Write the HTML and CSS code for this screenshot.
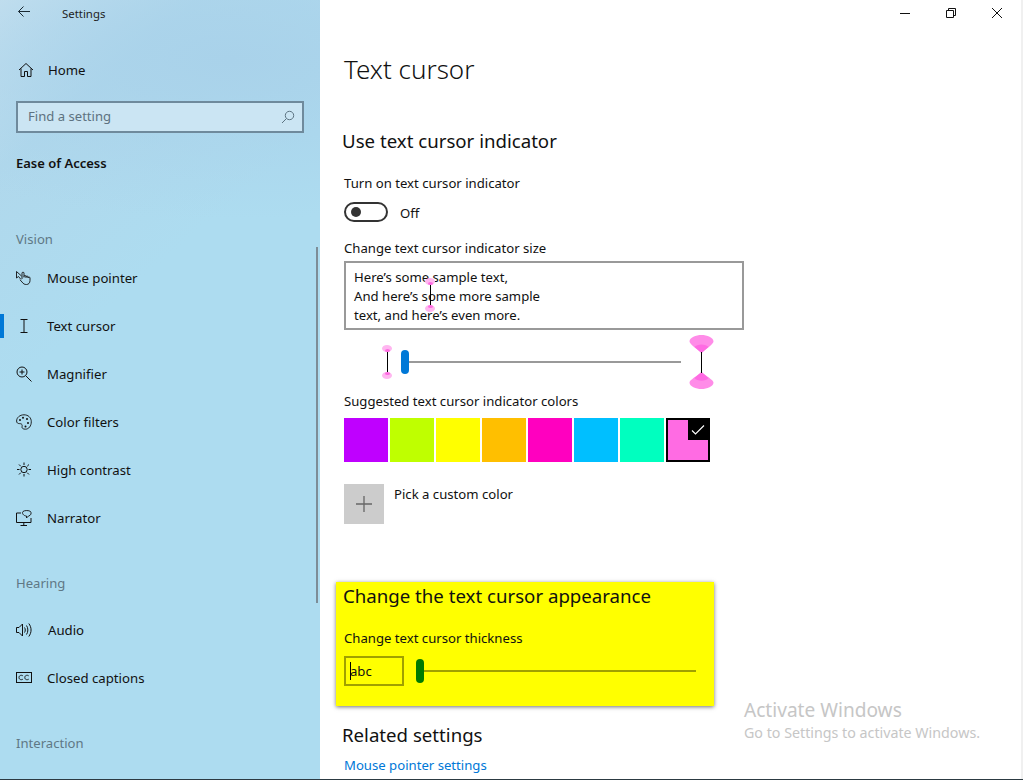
FILE: index.html
```html
<!DOCTYPE html>
<html lang="en">
<head>
<meta charset="utf-8">
<title>Settings</title>
<link rel="stylesheet" href="styles.css">
</head>
<body>
<div class="window">
  <aside class="sidebar">
    <div class="titlebar">
      <svg class="back" width="14" height="12" viewBox="0 0 14 12"><path d="M13 5.500H1.500M6.500.5L1.500 5.500 6.500 10.500" fill="none" stroke="#1a2a33" stroke-width="1"/></svg>
      <span class="apptitle">Settings</span>
    </div>
    <a class="home">
      <svg class="ico" width="16" height="16" viewBox="0 0 16 16"><path d="M1 8L8 1.500 15 8M3 6.500V14.500H6.500V9.500H9.500V14.500H13V6.500" fill="none" stroke="#111" stroke-width="1"/></svg>
      <span>Home</span>
    </a>
    <div class="search">
      <span class="placeholder">Find a setting</span>
      <svg width="14" height="14" viewBox="0 0 14 14"><circle cx="8.500" cy="5.500" r="4.200" fill="none" stroke="#5d7482"/><path d="M5.500 8.500L1 13" stroke="#5d7482" fill="none"/></svg>
    </div>
    <div class="category">Ease of Access</div>
    <div class="group first">Vision</div>
    <a class="item">
      <svg class="ico" width="16" height="16" viewBox="0 0 16 16"><path d="M.5 1.500L.5 8 2.500 6.500 5 9.500 M.5 1.500L5.500 6M6 9V3.200a1 1 0 0 1 2 0V7.500M8 6.500a1 1 0 0 1 2 0V8M10 7a1 1 0 0 1 2 0v1M12 8a1 1 0 0 1 2 0v2.500c0 2.500-1.500 4-3.500 4S7.500 14 6 12L4 9.800" fill="none" stroke="#111" stroke-width=".9"/></svg>
      <span>Mouse pointer</span>
    </a>
    <a class="item active">
      <svg class="ico" width="16" height="16" viewBox="0 0 16 16"><path d="M4.500 1.500H11.500M8 1.500V14.500M4.500 14.500H11.500" fill="none" stroke="#111" stroke-width="1"/></svg>
      <span>Text cursor</span>
    </a>
    <a class="item">
      <svg class="ico" width="16" height="16" viewBox="0 0 16 16"><circle cx="6" cy="6" r="5" fill="none" stroke="#111"/><path d="M3.500 6H8.500M6 3.500V8.500M9.700 9.700L15.500 15.500" fill="none" stroke="#111"/></svg>
      <span>Magnifier</span>
    </a>
    <a class="item">
      <svg class="ico" width="16" height="16" viewBox="0 0 16 16"><path d="M8 .8C3.800.8.6 3.600.6 7c0 2 1.400 2.600 2.800 2.600 1.400 0 2.800.3 2.800 2 0 1.200-.6 1.600.2 2.600.6.8 2 1 3 1 3.400 0 5.900-3.300 5.900-7.400C15.300 3.600 12.200.8 8 .8z" fill="none" stroke="#111" stroke-width=".9"/><circle cx="4" cy="6" r="1" fill="#111"/><circle cx="7" cy="3.800" r="1" fill="#111"/><circle cx="11" cy="5" r="1" fill="#111"/><circle cx="12" cy="9" r="1" fill="#111"/><circle cx="9.500" cy="12.500" r="1" fill="#111"/></svg>
      <span>Color filters</span>
    </a>
    <a class="item">
      <svg class="ico" width="16" height="16" viewBox="0 0 16 16"><circle cx="8" cy="7.500" r="3.200" fill="none" stroke="#111"/><path d="M8 .5V3M8 12V14.500M1 7.500H3.500M12.500 7.500H15M3 2.500L4.800 4.300M11.200 10.700L13 12.500M13 2.500L11.200 4.300M4.800 10.700L3 12.500" fill="none" stroke="#111"/></svg>
      <span>High contrast</span>
    </a>
    <a class="item">
      <svg class="ico" width="16" height="16" viewBox="0 0 16 16"><path d="M5 3H.5V12.500H15V8M4.500 15.500H11M7.800 12.500V15.500" fill="none" stroke="#111"/><path d="M7 1.500C8.500.2 13 .2 14.500 1.500 15.800 3 15 5.500 12.500 6L10.500 8V6C7.500 6 5.500 3 7 1.500z" fill="none" stroke="#111" stroke-width=".9"/></svg>
      <span>Narrator</span>
    </a>
    <div class="group">Hearing</div>
    <a class="item audio">
      <svg class="ico" width="16" height="16" viewBox="0 0 16 16"><path d="M.5 5.500H3L6.500 2V14L3 10.500H.5z" fill="none" stroke="#111"/><path d="M8.500 5.500C9.500 7 9.500 9 8.500 10.500M10.500 3.500C12.300 6 12.300 10 10.500 12.500M12.800 1.500C15.800 5.500 15.800 10.500 12.800 14.500" fill="none" stroke="#111"/></svg>
      <span>Audio</span>
    </a>
    <a class="item">
      <svg class="ico" width="16" height="16" viewBox="0 0 16 16"><rect x=".5" y="2.500" width="15" height="10" fill="none" stroke="#111"/><path d="M7 6C6 4.800 3 5 3 7.500S6 10.200 7 9M12.800 6C11.800 4.800 8.800 5 8.800 7.500S11.800 10.200 12.800 9" fill="none" stroke="#111" stroke-width=".9"/></svg>
      <span>Closed captions</span>
    </a>
    <div class="group last">Interaction</div>
    <div class="scrollbar"></div>
  </aside>

  <main class="content">
    <div class="controls">
      <svg width="10" height="10" viewBox="0 0 10 10"><path d="M0 5.500H10" stroke="#111" fill="none"/></svg>
      <svg width="10" height="10" viewBox="0 0 10 10"><path d="M.5 2.500H7.500V9.500H.5zM2.500 2.500V.5H9.500V7.500H7.500" stroke="#111" fill="none"/></svg>
      <svg width="10" height="10" viewBox="0 0 10 10"><path d="M0 0L10 10M10 0L0 10" stroke="#111" fill="none"/></svg>
    </div>
    <h1>Text cursor</h1>
    <h2 class="use">Use text cursor indicator</h2>
    <p class="label on">Turn on text cursor indicator</p>
    <div class="toggle-row">
      <span class="toggle"><span class="knob"></span></span>
      <span class="off">Off</span>
    </div>
    <p class="label sz">Change text cursor indicator size</p>
    <div class="sample">
      Here’s some sample text,<br>And here’s some more sample<br>text, and here’s even more.
      <span class="ind-sample">
        <span class="dot top"></span><span class="stem"></span><span class="dot bot"></span>
      </span>
    </div>
    <div class="size-row">
      <span class="ind-small">
        <span class="dot top"></span><span class="stem"></span><span class="dot bot"></span>
      </span>
      <span class="thumb"></span>
      <span class="track"></span>
      <svg class="ind-big" width="26" height="54" viewBox="0 0 26 54">
        <path d="M0.500 6.500C0.500 2.500 7 0 12.500 0S24.500 2.500 24.500 6.500C24.500 9 17 14 12.500 18 8 14 0.500 9 0.500 6.500z" fill="#ff8ce8"/>
        <path d="M5.500 12C8 8.500 17 8.500 19.500 12L12.500 18z" fill="#ff6be3"/>
        <path d="M0.500 47.500C0.500 51.500 7 54 12.500 54S24.500 51.500 24.500 47.500C24.500 45 17 41 12.500 37 8 41 0.500 45 0.500 47.500z" fill="#ff8ce8"/>
        <path d="M5.500 43C8 46.500 17 46.500 19.500 43L12.500 37z" fill="#ff6be3"/>
        <path d="M12.500 17V38" stroke="#000" stroke-width="1"/>
      </svg>
    </div>
    <p class="label sug">Suggested text cursor indicator colors</p>
    <div class="swatches">
      <span class="swatch c1"></span>
      <span class="swatch c2"></span>
      <span class="swatch c3"></span>
      <span class="swatch c4"></span>
      <span class="swatch c5"></span>
      <span class="swatch c6"></span>
      <span class="swatch c7"></span>
      <span class="swatch sel">
        <span class="badge">
          <svg width="14" height="12" viewBox="0 0 14 12"><path d="M1 6.500L4.500 10 13 1.500" fill="none" stroke="#fff" stroke-width="1.100"/></svg>
        </span>
      </span>
    </div>
    <div class="custom">
      <span class="plus">
        <svg width="16" height="16" viewBox="0 0 16 16"><path d="M0 8H16M8 0V16" stroke="#666" stroke-width="1.300" fill="none"/></svg>
      </span>
      <span>Pick a custom color</span>
    </div>
    <section class="panel">
      <h2>Change the text cursor appearance</h2>
      <p class="label thick">Change text cursor thickness</p>
      <div class="thick-row">
        <span class="abc"><span class="caret"></span>abc</span>
        <span class="thumb green"></span>
        <span class="track olive"></span>
      </div>
    </section>
    <h2 class="related">Related settings</h2>
    <a class="link">Mouse pointer settings</a>
    <div class="watermark">
      <div class="wm1">Activate Windows</div>
      <div class="wm2">Go to Settings to activate Windows.</div>
    </div>
  </main>
</div>
</body>
</html>
```
FILE: styles.css
```css
* { box-sizing: border-box; }
html, body { margin: 0; padding: 0; background: #fff; }
body {
  width: 1023px;
  height: 780px;
  overflow: hidden;
  font-family: "Noto Sans", "Open Sans", sans-serif;
  font-size: 13px;
  color: #111;
}
.window {
  display: flex;
  height: 780px;
  border-bottom: 1px solid #2c3a42;
}
.sidebar {
  position: relative;
  width: 320px;
  flex: none;
  display: flex;
  flex-direction: column;
  background:
    radial-gradient(ellipse 420px 160px at 230px 60px, #a9d2ea 0%, rgba(169,210,234,0) 100%),
    linear-gradient(140deg, #cbe3f0 0%, #b0d8ec 16%, #addcf0 38%, #addcf0 100%);
  overflow: hidden;
}
.titlebar {
  display: flex;
  align-items: center;
  height: 28px;
  padding-left: 17px;
}
.back { margin-top: -4px; }
.apptitle { margin-left: 31px; margin-top: -1px; font-size: 11.400px; color: #222; }
.home, .item {
  display: flex;
  align-items: center;
  height: 48px;
  padding-left: 16px;
  font-size: 13.200px;
  color: #111;
}
.home { margin-top: 18px; }
.home .ico { margin-left: 2px; margin-right: 14px; }
.item .ico { margin-right: 15px; }
.item.audio .ico { margin-right: 16px; }
.item { position: relative; }
.item.active::before {
  content: "";
  position: absolute;
  left: 0;
  top: 12px;
  width: 4px;
  height: 24px;
  background: #0078d7;
}
.search {
  display: flex;
  align-items: center;
  justify-content: space-between;
  margin: 7px 16px 0;
  height: 32px;
  padding: 0 7px 0 10px;
  border: 2px solid #6f8a9c;
  background: #cbe5f3;
  color: #5d7280;
  font-size: 13.100px;
}
.placeholder { margin-top: -2px; }
.category {
  margin: 21px 0 0 16px;
  font-weight: 600;
  font-size: 13px;
  line-height: 18px;
  color: #111;
}
.group {
  margin-left: 16px;
  font-size: 13.100px;
  line-height: 18px;
  color: #5f7885;
  height: 18px;
}
.group.first { margin-top: 58px; margin-bottom: 6px; }
.group:not(.first):not(.last) { margin-top: 32px; margin-bottom: 14px; }
.group.last { margin-top: 32px; }
.scrollbar {
  position: absolute;
  left: 316px;
  top: 247px;
  width: 2px;
  height: 356px;
  background: #7d8d97;
}
.content {
  position: relative;
  flex: 1;
  padding-left: 24px;
  overflow: hidden;
  border-right: 2px solid #f0f0f0;
}
.controls {
  display: flex;
  gap: 36px;
  justify-content: flex-end;
  padding: 8px 19px 0 0;
  height: 28px;
}
h1 {
  margin: 23px 0 0;
  font-size: 26px;
  line-height: 36px;
  font-weight: 300;
  color: #111;
}
h2 {
  margin: 0 0 0 -1px;
  font-size: 18.650px;
  line-height: 26px;
  font-weight: 400;
  color: #111;
}
h2.use { margin: 41px 0 0 -2px; }
.label { margin: 0; font-size: 13.150px; line-height: 18px; color: #111; }
.label.on { margin-top: 20px; }
.toggle-row {
  display: flex;
  align-items: center;
  gap: 12px;
  margin-top: 10px;
  height: 20px;
  font-size: 13.150px;
}
.off { margin-top: 2px; }
.toggle {
  display: flex;
  align-items: center;
  width: 44px;
  height: 20px;
  padding-left: 5px;
  border: 2px solid #333;
  border-radius: 10px;
}
.knob { width: 10px; height: 10px; border-radius: 50%; background: #333; }
.label.sz { margin-top: 17px; }
.sample {
  position: relative;
  width: 400px;
  height: 69px;
  margin-top: 4px;
  padding: 5px 0 0 8px;
  border: 2px solid #999;
  font-size: 13.150px;
  line-height: 19px;
}
.ind-sample, .ind-small {
  position: absolute;
  display: flex;
  flex-direction: column;
  align-items: center;
}
.ind-sample { left: 79px; top: 15px; width: 10px; }
.stem { width: 1px; background: #000; }
.ind-sample .stem { height: 20px; }
.dot {
  position: relative;
  width: 10px;
  height: 7px;
  border-radius: 50%;
  background: #ffb6f0;
}
.dot::after {
  content: "";
  position: absolute;
  left: 2.500px;
  width: 5px;
  height: 3px;
  border-radius: 50%;
  background: #ff6be3;
}
.dot.top::after { bottom: 0; }
.dot.bot::after { top: 0; }
.size-row {
  position: relative;
  display: flex;
  align-items: center;
  height: 54px;
  margin-top: 5px;
  padding-left: 57px;
}
.ind-small { left: 38px; top: 10px; width: 10px; }
.ind-small .stem { height: 20px; }
.thumb {
  width: 8px;
  height: 24px;
  border-radius: 4px;
  background: #0078d7;
  flex: none;
}
.track {
  width: 272px;
  height: 2px;
  background: #999;
  flex: none;
}
.ind-big { margin-left: 8px; }
.label.sug { margin-top: 3px; }
.swatches {
  display: flex;
  gap: 2px;
  margin-top: 8px;
}
.swatch { position: relative; width: 44px; height: 44px; }
.c1 { background: #bf00ff; }
.c2 { background: #bfff00; }
.c3 { background: #ffff00; }
.c4 { background: #ffbf00; }
.c5 { background: #ff00bf; }
.c6 { background: #00bfff; }
.c7 { background: #00ffbf; }
.sel { background: #ff6be3; border: 2px solid #000; }
.badge {
  position: absolute;
  top: 0;
  right: 0;
  width: 20px;
  height: 20px;
  display: flex;
  align-items: center;
  justify-content: center;
  background: #000;
}
.custom {
  display: flex;
  gap: 10px;
  margin-top: 22px;
  height: 40px;
  font-size: 13.150px;
  line-height: 20px;
}
.plus {
  display: flex;
  align-items: center;
  justify-content: center;
  width: 40px;
  height: 40px;
  background: #ccc;
}
.panel {
  width: 378px;
  height: 124px;
  margin: 58px 0 0 -8px;
  padding: 0 0 0 8px;
  background: #ff0;
  box-shadow: 0 1px 4px rgba(0,0,0,.55);
}
.panel h2 { line-height: 28px; }
.label.thick { margin-top: 19px; }
.thick-row { display: flex; align-items: center; margin-top: 9px; height: 30px; }
.abc {
  position: relative;
  display: flex;
  align-items: center;
  width: 60px;
  height: 30px;
  margin-right: 12px;
  padding-left: 4px;
  border: 2px solid #a0a000;
  font-size: 13.150px;
}
.caret {
  position: absolute;
  left: 4px;
  top: 4px;
  width: 1px;
  height: 18px;
  background: #000;
}
.thumb.green { background: #007a00; }
.track.olive { background: #a0a000; }
h2.related { margin: 16px 0 0 -2px; }
.link {
  display: block;
  margin-top: 8px;
  font-size: 13.150px;
  line-height: 18px;
  color: #0078d7;
}
.watermark {
  position: absolute;
  left: 424px;
  top: 697px;
  color: #c6c6c6;
}
.wm1 { font-size: 19.100px; line-height: 26px; }
.wm2 { font-size: 14.250px; line-height: 20px; }
```
